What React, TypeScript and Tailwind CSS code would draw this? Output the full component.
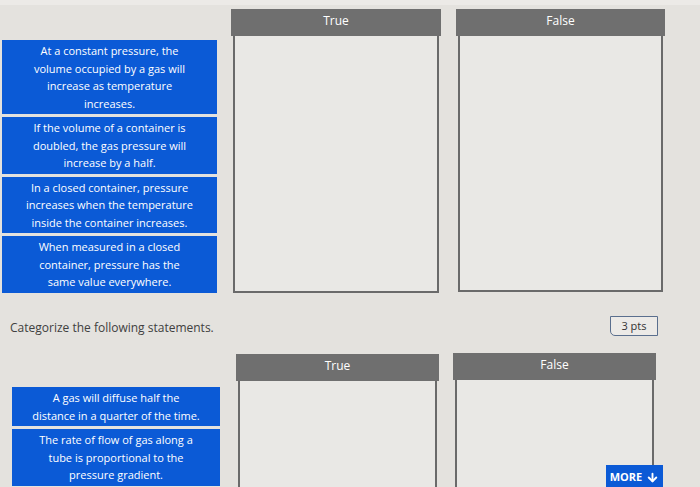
import { ArrowDown } from 'lucide-react';

const topCards = [
  'At a constant pressure, the volume occupied by a gas will increase as temperature increases.',
  'If the volume of a container is doubled, the gas pressure will increase by a half.',
  'In a closed container, pressure increases when the temperature inside the container increases.',
  'When measured in a closed container, pressure has the same value everywhere.',
];

const bottomCards = [
  'A gas will diffuse half the distance in a quarter of the time.',
  'The rate of flow of gas along a tube is proportional to the pressure gradient.',
  '',
];

function Card({ text, className }: { text: string; className: string }) {
  return (
    <div className={`${className} bg-[#0b5ad6] text-white text-[11px] leading-[17.5px] text-center py-[2px]`}>
      {text}
    </div>
  );
}

function Bin({ label, bodyHeight }: { label: string; bodyHeight: string }) {
  return (
    <div className="flex flex-col">
      <div className="h-[27px] pb-[3px] bg-[#6f6f6f] text-white text-[12px] flex items-center justify-center">
        {label}
      </div>
      <div className={`${bodyHeight} mx-[2px] bg-[#e9e8e5] border-x-2 border-b-2 border-[#6a6a6a]`} />
    </div>
  );
}

export default function App() {
  return (
    <div
      className="relative w-[700px] h-[487px] overflow-hidden bg-[#e4e2de] text-[#404040]"
      style={{ fontFamily: '"Open Sans", "Noto Sans", sans-serif' }}
    >
      <div className="h-[5px] bg-[#eceae7]" />

      {/* first question */}
      <div className="flex pt-[4px]">
        <div className="ml-[2px] mt-[31px] flex flex-col gap-[3px]">
          {topCards.map((c, i) => (
            <Card key={i} text={c} className="w-[215px] px-[22px]" />
          ))}
        </div>
        <div className="ml-[14px] w-[210px]">
          <Bin label="True" bodyHeight="h-[257px]" />
        </div>
        <div className="ml-[15px] w-[209px]">
          <Bin label="False" bodyHeight="h-[256px]" />
        </div>
      </div>

      {/* second question */}
      <div className="flex items-start justify-between pl-[10px] pr-[42px] mt-[23px]">
        <p className="text-[12px] leading-[18px] mt-[3px]">Categorize the following statements.</p>
        <div className="w-[48px] h-[20px] border border-[#5a6f8e] rounded-bl-[5px] bg-[#eceae7] text-[11px] flex items-center justify-center text-[#333]">
          3 pts
        </div>
      </div>

      <div className="flex mt-[17px]">
        <div className="ml-[12px] mt-[33px] flex flex-col gap-[3px]">
          {bottomCards.map((c, i) => (
            <Card key={i} text={c} className="w-[208px] px-[20px] min-h-[20px]" />
          ))}
        </div>
        <div className="ml-[16px] w-[203px]">
          <Bin label="True" bodyHeight="h-[120px]" />
        </div>
        <div className="ml-[14px] w-[203px] -mt-[1px]">
          <Bin label="False" bodyHeight="h-[120px]" />
        </div>
      </div>

      <button className="absolute left-[606px] top-[465px] w-[57px] h-[24px] bg-[#0b5ad6] text-white text-[11px] font-bold flex items-center justify-center gap-[4px]">
        MORE
        <ArrowDown size={13} strokeWidth={3.5} />
      </button>
    </div>
  );
}
